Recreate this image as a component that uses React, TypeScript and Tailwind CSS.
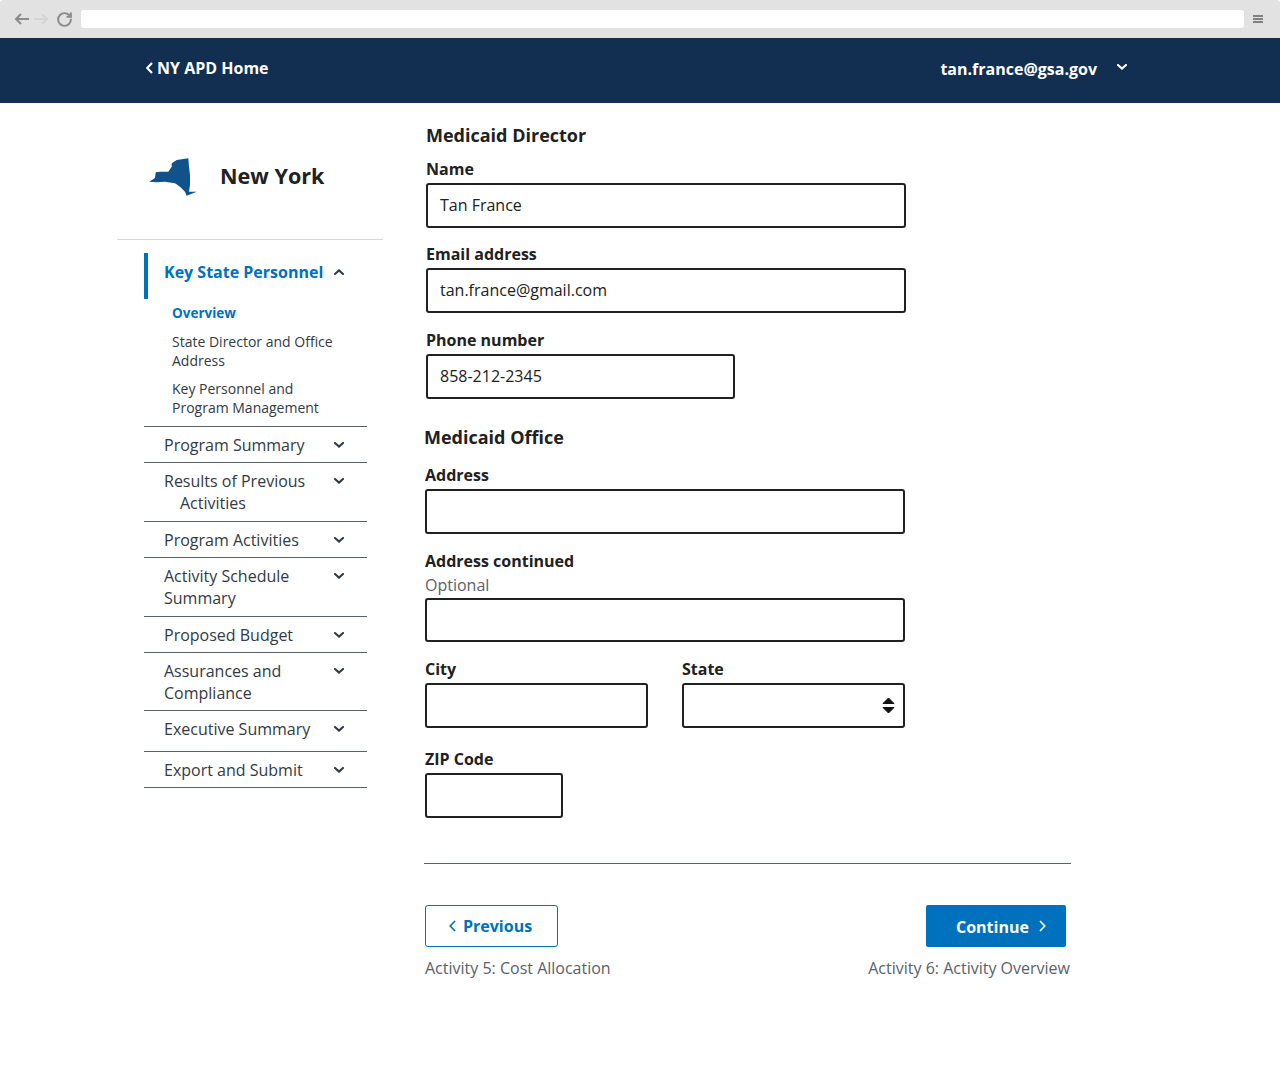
import { RotateCw } from "lucide-react";

function Field({
  label,
  value = "",
  hint,
  className = "",
}: {
  label: string;
  value?: string;
  hint?: string;
  className?: string;
}) {
  return (
    <div className={className}>
      <div className="text-[16px] leading-[22px] font-bold text-[#212121]">{label}</div>
      {hint && <div className="mt-[2px] text-[16px] leading-[22px] text-[#5b616b]">{hint}</div>}
      <input
        readOnly
        value={value}
        className={`block w-full rounded-[3px] border-2 border-[#212121] bg-white px-[12px] pb-[2px] text-[16px] text-[#212121] outline-none ${
          hint ? "mt-[2px] h-[44px]" : "mt-[3px] h-[45px]"
        }`}
      />
    </div>
  );
}

// small chevron, same drawing turned four ways
function ChevronDown({ className = "" }: { className?: string }) {
  return (
    <svg viewBox="0 0 10 6" fill="none" className={`h-[6px] w-[10px] ${className}`}>
      <path d="M1 1l4 3.6L9 1" stroke="currentColor" strokeWidth="2" strokeLinecap="square" />
    </svg>
  );
}

function ChevronUp({ className = "" }: { className?: string }) {
  return (
    <svg viewBox="0 0 10 6" fill="none" className={`h-[6px] w-[10px] ${className}`}>
      <path d="M1 5L5 1.4 9 5" stroke="currentColor" strokeWidth="2" strokeLinecap="square" />
    </svg>
  );
}

function ChevronLeft({ className = "", width = 1.6 }: { className?: string; width?: number }) {
  return (
    <svg viewBox="0 0 7 12" fill="none" className={`h-[12px] w-[7px] ${className}`}>
      <path d="M6 1L1.2 6 6 11" stroke="currentColor" strokeWidth={width} />
    </svg>
  );
}

function ChevronRight({ className = "" }: { className?: string }) {
  return (
    <svg viewBox="0 0 7 12" fill="none" className={`h-[12px] w-[7px] ${className}`}>
      <path d="M1 1l4.8 5L1 11" stroke="currentColor" strokeWidth="1.6" />
    </svg>
  );
}

function NavItem({
  lines,
  last = false,
  pad = "pt-[7px] pb-[6px]",
}: {
  lines: string[];
  last?: boolean;
  pad?: string;
}) {
  return (
    <div
      className={`relative border-t border-[#5b616b] pl-[20px] ${pad} text-[16px] leading-[22px] text-[#323a45] ${
        last ? "border-b" : ""
      }`}
    >
      {lines.map((line) => (
        <div key={line} className={line === "Activities" ? "pl-[16px]" : ""}>
          {line}
        </div>
      ))}
      <ChevronDown className="absolute top-[15px] left-[190px] text-[#323a45]" />
    </div>
  );
}

function NewYorkShape() {
  return (
    <svg viewBox="149 158 49 38" className="h-[38px] w-[49px]">
      <path
        fill="#12528a"
        d="M149.3 181.7L155 178l.7-5.7 4.3-.6h8.3l3.4-5v-3.4l5-3.3 11.6-1.7.7 8.4 1 8.3v10l-1 6.7h7.7l-10 4-1.7-4-5-5-5-3.4-10-1.6-8.3.6z"
      />
    </svg>
  );
}

function BrowserArrow({ back, className = "" }: { back?: boolean; className?: string }) {
  return (
    <svg viewBox="0 0 15 12" fill="none" className={`h-[12px] w-[15px] ${className}`}>
      <path
        d={back ? "M15 6H2M7 1L2 6l5 5" : "M0 6h13M8 1l5 5-5 5"}
        stroke="currentColor"
        strokeWidth="2"
      />
    </svg>
  );
}

export default function App() {
  return (
    <div className="min-h-[1080px] bg-white font-['Open_Sans',sans-serif]">
      {/* Browser chrome */}
      <div className="flex h-[38px] items-center rounded-t-[4px] bg-[#e2e2e2] pr-[17px] pl-[14px]">
        <BrowserArrow back className="text-[#8a8a8a]" />
        <BrowserArrow className="ml-[5px] text-[#d4d4d4]" />
        <RotateCw size={17} strokeWidth={2.8} className="ml-[7px] text-[#8a8a8a]" />
        <div className="ml-[8px] h-[18px] flex-1 rounded-[3px] bg-white" />
        <div className="ml-[9px] flex w-[10px] flex-col gap-[1px]">
          <div className="h-[2px] bg-[#808080]" />
          <div className="h-[2px] bg-[#808080]" />
          <div className="h-[2px] bg-[#808080]" />
        </div>
      </div>

      {/* Header */}
      <header className="flex h-[65px] items-center justify-between bg-[#122e51] pr-[153px] pb-[5px] pl-[146px] text-white">
        <div className="flex items-center gap-[4px] text-[16px] font-bold">
          <ChevronLeft width={2.2} className="h-[10px] w-[6px]" />
          NY APD Home
        </div>
        <div className="flex items-center gap-[20px] text-[16px] font-bold">
          <span className="mt-[2px]">tan.france@gsa.gov</span>
          <ChevronDown className="mb-[3px]" />
        </div>
      </header>

      <div className="flex">
        {/* Sidebar */}
        <aside className="ml-[117px] w-[266px]">
          <div className="flex h-[137px] items-center border-b border-[#d6d7d9] pt-[12px] pl-[32px]">
            <NewYorkShape />
            <span className="mb-[2px] ml-[22px] text-[21.6px] font-bold text-[#212121]">New York</span>
          </div>
          <nav className="mt-[13px] ml-[27px] w-[223px]">
            <div className="relative flex h-[46px] items-center border-l-[4px] border-[#0071bc] pb-[8px] pl-[16px] text-[16px] font-bold text-[#0071bc]">
              Key State Personnel
              <ChevronUp className="absolute top-[16px] left-[186px] text-[#323a45]" />
            </div>
            <div className="pt-[5px] pb-[9px] pl-[28px] text-[14px] leading-[19px] text-[#323a45]">
              <div className="text-[13.5px] font-bold text-[#0071bc]">Overview</div>
              <div className="mt-[9px]">
                State Director and Office
                <br />
                Address
              </div>
              <div className="mt-[9px]">
                Key Personnel and
                <br />
                Program Management
              </div>
            </div>
            <NavItem lines={["Program Summary"]} />
            <NavItem lines={["Results of Previous", "Activities"]} pad="py-[7px]" />
            <NavItem lines={["Program Activities"]} />
            <NavItem lines={["Activity Schedule", "Summary"]} pad="py-[7px]" />
            <NavItem lines={["Proposed Budget"]} />
            <NavItem lines={["Assurances and", "Compliance"]} />
            <NavItem lines={["Executive Summary"]} pad="pt-[7px] pb-[11px]" />
            <NavItem lines={["Export and Submit"]} last />
          </nav>
        </aside>

        {/* Main form */}
        <main className="ml-[41px] w-[647px] pt-[20px]">
          <section className="ml-[2px] w-[480px]">
            <h2 className="text-[18px] leading-[25px] font-bold text-[#212121]">Medicaid Director</h2>
            <Field label="Name" value="Tan France" className="mt-[10px]" />
            <Field label="Email address" value="tan.france@gmail.com" className="mt-[15px]" />
            <Field label="Phone number" value="858-212-2345" className="mt-[16px] w-[309px]" />
          </section>

          <section className="mt-[26px]">
            <h2 className="text-[18px] leading-[25px] font-bold text-[#212121]">Medicaid Office</h2>
            <div className="ml-[1px] w-[480px]">
              <Field label="Address" className="mt-[14px]" />
              <Field label="Address continued" hint="Optional" className="mt-[16px]" />
              <div className="mt-[16px] flex gap-[34px]">
                <Field label="City" className="w-[223px]" />
                <div className="relative w-[223px]">
                  <Field label="State" />
                  <svg viewBox="0 0 13 17" className="absolute top-[39px] right-[10px] h-[17px] w-[13px]">
                    <path
                      fill="#111"
                      stroke="#111"
                      strokeLinejoin="round"
                      d="M6.5 1L12 6.5H1zM1 10.5h11L6.5 16z"
                    />
                  </svg>
                </div>
              </div>
              <Field label="ZIP Code" className="mt-[20px] w-[138px]" />
            </div>
          </section>

          <div className="mt-[45px] border-t border-[#5b616b]" />

          <div className="mt-[41px] flex justify-between pr-[5px] pl-[1px]">
            <div>
              <button className="flex h-[42px] w-[133px] items-center gap-[7px] rounded-[3px] border border-[#0071bc] pl-[23px] text-[16px] font-bold text-[#0071bc]">
                <ChevronLeft />
                Previous
              </button>
              <div className="mt-[10px] text-[16px] leading-[22px] text-[#5b616b]">Activity 5: Cost Allocation</div>
            </div>
            <div className="flex flex-col items-end">
              <button className="flex h-[42px] w-[140px] items-center gap-[10px] rounded-[2px] bg-[#0071bc] pl-[30px] text-[16px] font-bold text-white">
                <span className="mt-[1px]">Continue</span>
                <ChevronRight />
              </button>
              <div className="mt-[10px] -mr-[4px] text-[16px] leading-[22px] text-[#5b616b]">
                Activity 6: Activity Overview
              </div>
            </div>
          </div>
        </main>
      </div>
    </div>
  );
}
